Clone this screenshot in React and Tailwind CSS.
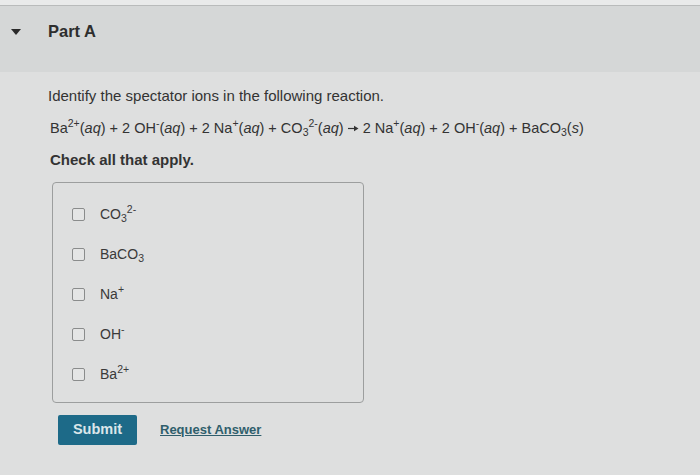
import React from "react";

const Sup = ({ children }) => (
  <sup className="text-[10.5px] relative -top-[6px] leading-none">{children}</sup>
);
const Sub = ({ children }) => (
  <sub className="text-[10.5px] relative top-[3px] leading-none">{children}</sub>
);
const I = ({ children }) => <span className="italic">{children}</span>;

function Option({ children }) {
  return (
    <div className="flex items-center h-[20px]">
      <span className="w-[13px] h-[13px] border-[1.5px] border-[#8a8c8c] rounded-[2px] bg-[#e4e5e5] mr-[15px]" />
      <span className="text-[14px] text-[#3a3a3a]">{children}</span>
    </div>
  );
}

export default function App() {
  return (
    <div
      className="w-[700px] h-[475px] overflow-hidden bg-[#dedfdf] text-[#333]"
      style={{ fontFamily: '"Liberation Sans", Arial, sans-serif' }}
    >
      <div className="h-[5px] bg-[#e9eaea]" />
      <div className="h-[67px] bg-[#d5d7d7] border-t border-[#b9bbbb] flex items-center">
        <svg width="10" height="7" viewBox="0 0 10 7" className="ml-[11px] mt-[-14px]">
          <path d="M0 0 L10 0 L5 6 Z" fill="#2a2a2a" />
        </svg>
        <span className="ml-[27px] mt-[-16px] text-[16.5px] font-bold text-[#2e2e2e]">Part A</span>
      </div>
      <div className="pl-[48px] pt-[15px]">
        <div className="text-[15px] text-[#333] leading-[18px]">
          Identify the spectator ions in the following reaction.
        </div>
        <div className="mt-[13px] h-[20px] text-[14.5px] text-[#333] leading-[20px] pl-[2px] whitespace-nowrap">
          Ba<Sup>2+</Sup>(<I>aq</I>) + 2 OH<Sup>-</Sup>(<I>aq</I>) + 2 Na<Sup>+</Sup>(<I>aq</I>) + CO<Sub>3</Sub>
          <Sup>2-</Sup>(<I>aq</I>){" "}
          <svg width="11" height="7" viewBox="0 0 11 7" className="inline-block align-middle mb-[2px]">
            <path d="M0 3.5 H8" stroke="#333" strokeWidth="1.2" />
            <path d="M6 0.8 L10.5 3.5 L6 6.2 Z" fill="#333" />
          </svg>{" "}
          2 Na<Sup>+</Sup>(<I>aq</I>) + 2 OH<Sup>-</Sup>(<I>aq</I>) + BaCO<Sub>3</Sub>(<I>s</I>)
        </div>
        <div className="mt-[13px] text-[15px] font-bold text-[#333] leading-[18px] pl-[2px]">
          Check all that apply.
        </div>
        <div className="mt-[13px] ml-[4px] w-[312px] h-[221px] border border-[#9c9e9e] rounded-[4px] pl-[19px] pt-[21px] flex flex-col gap-[20px]">
          <Option>
            CO<Sub>3</Sub>
            <Sup>2-</Sup>
          </Option>
          <Option>
            BaCO<Sub>3</Sub>
          </Option>
          <Option>
            Na<Sup>+</Sup>
          </Option>
          <Option>
            OH<Sup>-</Sup>
          </Option>
          <Option>
            Ba<Sup>2+</Sup>
          </Option>
        </div>
        <div className="mt-[12px] ml-[10px] flex items-center">
          <button className="w-[79px] h-[30px] rounded-[2px] bg-[#1d6a88] text-[#dbe6ea] text-[14.5px] font-bold">
            Submit
          </button>
          <span className="ml-[23px] text-[13px] font-bold text-[#2f5e6c] underline">
            Request Answer
          </span>
        </div>
      </div>
    </div>
  );
}
